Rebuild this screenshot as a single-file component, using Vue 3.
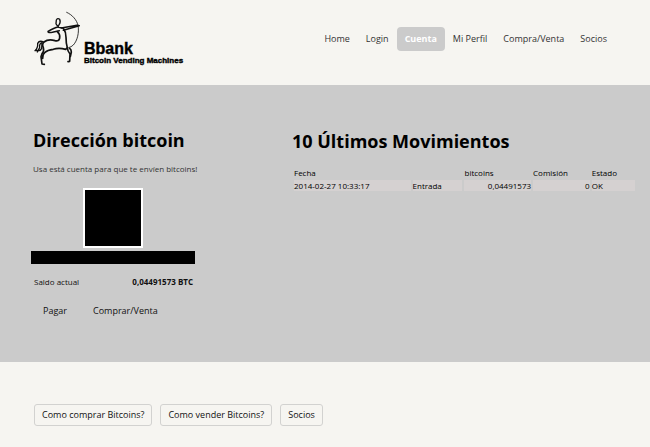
<script setup>
  import {ref} from 'vue'

  const current = ref('Cuenta')
  const menu = ['Home', 'Login', 'Cuenta', 'Mi Perfil', 'Compra/Venta', 'Socios']
  const links = ['Como comprar Bitcoins?', 'Como vender Bitcoins?', 'Socios']
  const movements = [
    {date: '2014-02-27 10:33:17', type: 'Entrada', amount: '0,04491573', fee: '0', state: 'OK'}
  ]

  const select = (item) => {
    current.value = item
  }
</script>

<template>
  <div class="page">

    <header class="header">
      <a class="logo" href="#">
        <svg class="centaur" viewBox="0 0 180 195" aria-hidden="true">
          <g fill="none" stroke="#111" stroke-linecap="round" stroke-linejoin="round">
            <path stroke-width="2.5" d="M110 22C128 30 140 45 144 61C148 83 142 107 130 120Q124 126 116 128" />
            <path stroke-width="4" d="M79 45Q83 38 89 43Q93 51 87 60Q82 65 78 56ZM83 62L86 67L98 69" />
            <path stroke-width="4.5" d="M84 66Q73 68 54 79Q53 84 67 82L88 77M94 69L141 61L148 62M100 76L145 63" />
            <path stroke-width="5" d="M82 80Q91 88 89 99Q87 110 75 107Q55 101 42 111Q35 118 40 128Q43 139 36 146L33 155L36 177L43 178" />
            <path stroke-width="5" d="M100 70Q109 83 108 97Q108 116 112 128L107 133Q86 127 70 133Q52 135 44 143Q36 150 38 160" />
            <path stroke-width="5" d="M112 129Q113 139 120 147L119 169L114 170M119 130Q124 134 124 141L121 155" />
            <path stroke-width="4" d="M41 111Q28 105 23 115Q24 129 15 137M36 113Q27 116 29 128L22 141M36 115L35 130Q31 138 25 137M15 137L22 136" />
          </g>
        </svg>
        <span class="brand">
          <strong class="brand_name">Bbank</strong>
          <span class="brand_sub">Bitcoin Vending Machines</span>
        </span>
      </a>

      <nav class="menu">
        <a v-for="item in menu" :key="item" href="#" :class="item === current ? 'menu_item menu_item_active' : 'menu_item'" @click.prevent="select(item)">{{item}}</a>
      </nav>
    </header>

    <main class="content">
      <section class="account">
        <h1>Dirección bitcoin</h1>
        <p class="hint">Usa está cuenta para que te envíen bitcoins!</p>
        <div class="qr"></div>
        <div class="address"></div>
        <div class="balance">
          <span>Saldo actual</span>
          <strong>0,04491573 BTC</strong>
        </div>
        <div class="actions">
          <button type="button">Pagar</button>
          <button type="button">Comprar/Venta</button>
        </div>
      </section>

      <section class="movements">
        <h1>10 Últimos Movimientos</h1>
        <table>
          <thead>
            <tr>
              <th class="date">Fecha</th>
              <th class="type"></th>
              <th class="amount">bitcoins</th>
              <th class="fee">Comisión</th>
              <th class="state">Estado</th>
            </tr>
          </thead>
          <tbody>
            <tr v-for="row in movements" :key="row.date">
              <td>{{row.date}}</td>
              <td>{{row.type}}</td>
              <td class="number">{{row.amount}}</td>
              <td class="number">{{row.fee}}</td>
              <td>{{row.state}}</td>
            </tr>
          </tbody>
        </table>
      </section>
    </main>

    <footer class="footer">
      <a v-for="link in links" :key="link" class="footer_link" href="#">{{link}}</a>
    </footer>

  </div>
</template>

<style>
body {
  margin: 0;
  background-color: #f6f5f1;
}
</style>

<style scoped>
* {
  box-sizing: border-box;
}

.page {
  font-family: "Open Sans", "Noto Sans", sans-serif;
  font-size: 8px;
  line-height: 12px;
  color: #111;
}

a {
  color: inherit;
  text-decoration: none;
}

.header {
  display: flex;
  justify-content: space-between;
  align-items: flex-start;
  height: 85px;
  padding: 5px 35px 0 30px;
}

.logo {
  display: flex;
  align-items: flex-end;
}

.centaur {
  width: 60px;
  height: 65px;
}

.brand {
  display: flex;
  flex-direction: column;
  margin-left: -6px;
  padding-bottom: 5px;
  font-family: "Liberation Sans", Arial, sans-serif;
  font-weight: bold;
  color: #000;
  white-space: nowrap;
  -webkit-text-stroke: 0.4px #000;
}

.brand_name {
  font-size: 16px;
  line-height: 14px;
}

.brand_sub {
  font-size: 8px;
  line-height: 9px;
}

.menu {
  display: flex;
  padding-top: 22px;
}

.menu_item {
  padding: 0 8px;
  border-radius: 4px;
  font-size: 9px;
  line-height: 24px;
  color: #333;
}

.menu_item_active {
  background-color: #cbcbcb;
  color: #fff;
  font-weight: bold;
}

.content {
  display: flex;
  gap: 97px;
  padding: 42px 13px 44px 31px;
  background-color: #cbcbcb;
}

h1 {
  margin: 0;
  font-size: 18px;
  line-height: 26px;
  color: #000;
}

.account {
  flex: 0 0 164px;
  min-width: 0;
}

.account h1,
.hint {
  padding-left: 2px;
  white-space: nowrap;
}

.hint {
  margin: 10px 0 13px;
  color: #333;
}

.qr {
  width: 60px;
  height: 60px;
  margin: 0 auto 3px;
  border: 2px solid #fff;
  background-color: #000;
}

.address {
  height: 13px;
  background-color: #000;
}

.balance {
  display: flex;
  justify-content: space-between;
  padding: 12px 2px 0 3px;
}

.actions {
  display: flex;
  gap: 26px;
  padding: 16px 0 0 12px;
}

.actions button {
  padding: 0;
  border: 0;
  background-color: transparent;
  font-family: inherit;
  font-size: 9px;
  line-height: 14px;
  color: #111;
}

.movements {
  flex: 1;
}

.movements h1 {
  padding-top: 1px;
}

table {
  width: 100%;
  margin-top: 11px;
  border-spacing: 2px;
  table-layout: fixed;
  line-height: 11px;
  color: #000;
}

th,
td {
  padding: 0;
  text-align: left;
  font-weight: normal;
  white-space: nowrap;
}

td {
  background-color: #d5d1d1;
}

.date {
  width: 35%;
}

.type {
  width: 15%;
}

.amount {
  width: 20%;
}

.fee {
  width: 17%;
}

.number {
  text-align: right;
}

.footer {
  display: flex;
  gap: 8px;
  padding: 42px 34px 20px;
}

.footer_link {
  padding: 0 7px;
  border: 1px solid #d2d2d0;
  border-radius: 3px;
  font-size: 9px;
  line-height: 20px;
}
</style>
